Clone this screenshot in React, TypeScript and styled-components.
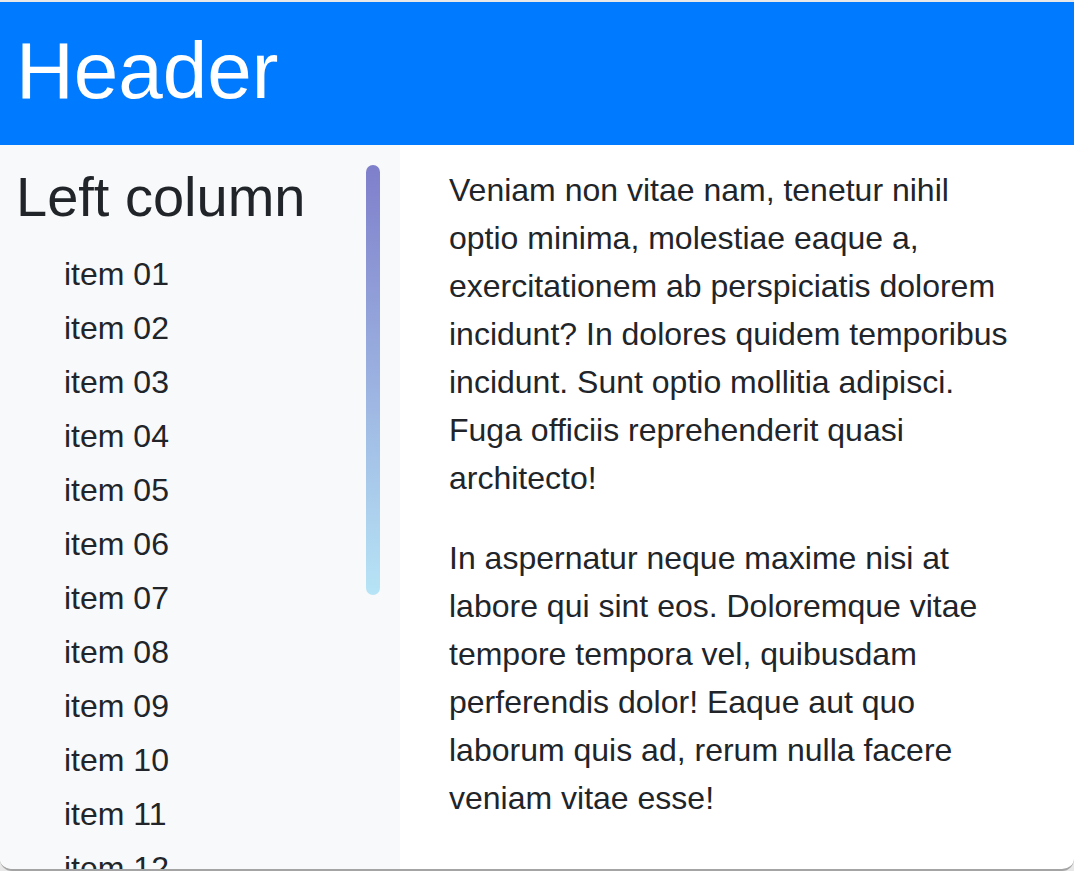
import styled, { createGlobalStyle } from 'styled-components';

/* —— tokens —— */
const blue     = '#007bff';
const txtMain  = '#212529';
const bgSide   = '#f8f9fa';

const GlobalStyle = createGlobalStyle`
  html, body {
    margin: 0;
    height: 100%;
    background: #e8e8e8;
  }
  body {
    padding-top: 2px;
    box-sizing: border-box;
    font-family: "Liberation Sans", Arial, sans-serif;
    color: ${txtMain};
  }
  *, *::before, *::after { box-sizing: border-box; }
`;

/* —— window shell —— */
const Window = styled.div`
  height: calc(100vh - 2px);
  display: flex;
  flex-direction: column;
  background: #fff;
  border-bottom: 2px solid #a4a4a4;
  border-radius: 0 0 12px 12px;
  overflow: hidden;
`;

const Header = styled.header`
  flex: none;
  height: 143px;
  padding: 21px 16px 0;
  background: ${blue};
  color: #fff;
  h1 {
    margin: 0;
    font-size: 80px;
    font-weight: 400;
    line-height: 1.2;
  }
`;

const Body = styled.div`
  flex: 1;
  min-height: 0;
  display: flex;
`;

/* —— left column —— */
const Sidebar = styled.aside`
  position: relative;
  flex: none;
  width: 400px;
  display: flex;
  padding-right: 34px;
  background: ${bgSide};
`;

const SideScroll = styled.div`
  flex: 1;
  overflow-y: auto;
  padding: 18px 0 0 16px;
  scrollbar-width: none;
  &::-webkit-scrollbar { display: none; }
`;

/* custom scroll thumb, drawn over the column edge */
const Thumb = styled.div`
  position: absolute;
  top: 20px;
  right: 20px;
  width: 14px;
  height: 430px;
  border-radius: 7px;
  background: linear-gradient(to bottom, #7f7fcb, #b7e4f6);
`;

const SideTitle = styled.h3`
  margin: 0 0 17px;
  font-size: 56px;
  font-weight: 400;
  line-height: 1.2;
  white-space: nowrap;
`;

const ItemList = styled.ul`
  margin: 0;
  padding: 0 0 0 48px;
  list-style: none;
`;

const Item = styled.li`
  font-size: 32px;
  line-height: 54px;
  white-space: nowrap;
`;

/* —— right column —— */
const Main = styled.main`
  flex: 1;
  min-width: 0;
  overflow-y: auto;
  padding: 21px 59px 0 49px;
  p {
    margin: 0 0 32px;
    font-size: 32px;
    line-height: 48px;
  }
`;

const items = Array.from({ length: 20 }, (_, i) => `item ${String(i + 1).padStart(2, '0')}`);

export default function App() {
  return (
    <>
      <GlobalStyle />
      <Window>
        <Header>
          <h1>Header</h1>
        </Header>
        <Body>
          <Sidebar>
            <SideScroll>
              <SideTitle>Left column</SideTitle>
              <ItemList>
                {items.map(t => <Item key={t}>{t}</Item>)}
              </ItemList>
            </SideScroll>
            <Thumb />
          </Sidebar>
          <Main>
            <p>
              Veniam non vitae nam, tenetur nihil optio minima, molestiae eaque a,
              exercitationem ab perspiciatis dolorem incidunt? In dolores quidem
              temporibus incidunt. Sunt optio mollitia adipisci. Fuga officiis
              reprehenderit quasi architecto!
            </p>
            <p>
              In aspernatur neque maxime nisi at labore qui sint eos. Doloremque vitae
              tempore tempora vel, quibusdam perferendis dolor! Eaque aut quo laborum
              quis ad, rerum nulla facere veniam vitae esse!
            </p>
          </Main>
        </Body>
      </Window>
    </>
  );
}
